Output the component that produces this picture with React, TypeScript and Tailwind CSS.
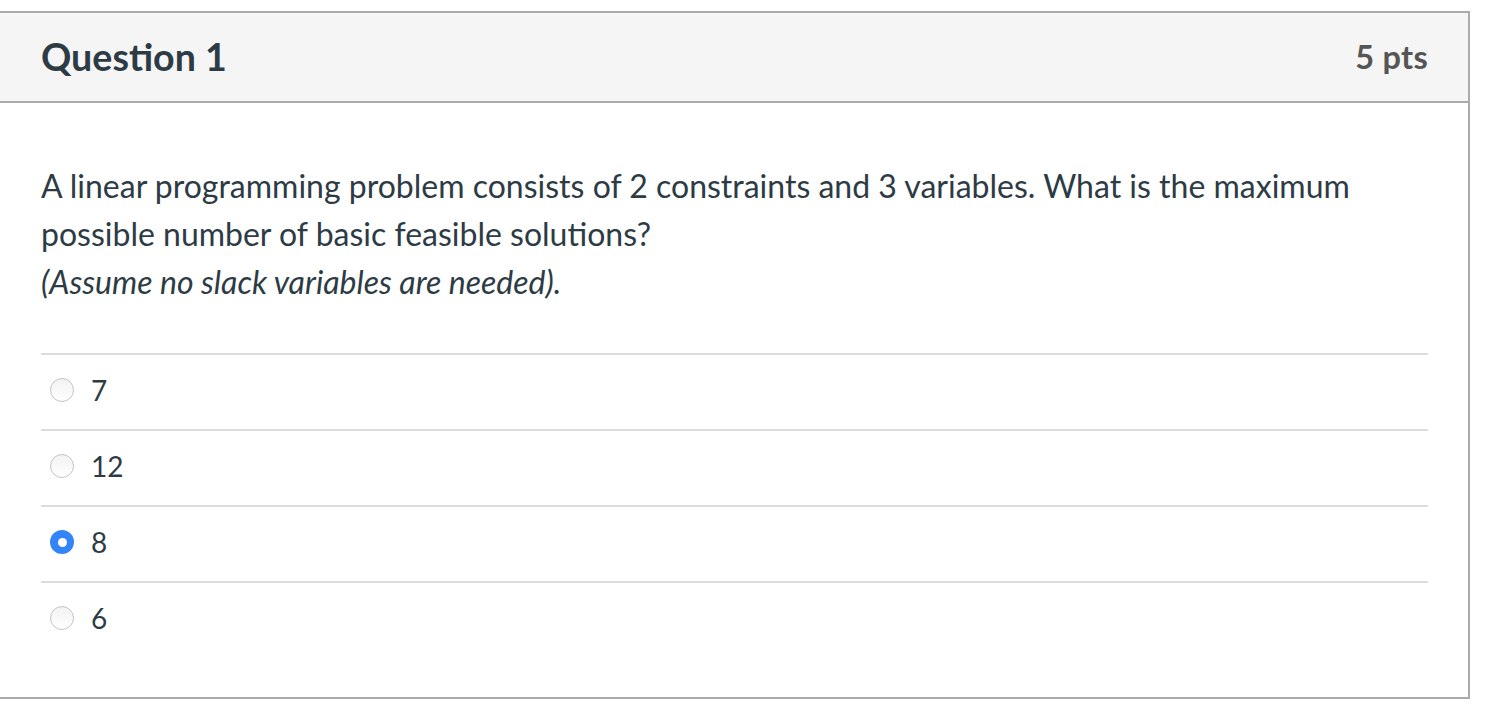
import React from 'react';

const answers = [
  { id: 'a1', label: '7', checked: false },
  { id: 'a2', label: '12', checked: false },
  { id: 'a3', label: '8', checked: true },
  { id: 'a4', label: '6', checked: false },
];

const Radio: React.FC<{ checked: boolean }> = ({ checked }) =>
  checked ? (
    <span className="w-[24px] h-[24px] rounded-full bg-[#3385f7] flex items-center justify-center shrink-0">
      <span className="w-[9px] h-[9px] rounded-full bg-white" />
    </span>
  ) : (
    <span className="w-[24px] h-[24px] rounded-full bg-gradient-to-b from-[#f2f2f2] to-white border border-[#c4c4c4] shrink-0" />
  );

export default function App() {
  return (
    <div className="min-h-screen bg-white pt-[11px] overflow-hidden" style={{ fontFamily: 'Lato, "Open Sans", sans-serif' }}>
      <div className="-ml-[2px] w-[1472px] border-2 border-[#ababab] text-[#2d3b45]">
        <div className="h-[90px] bg-[#f5f5f5] border-b-2 border-[#ababab] flex items-center justify-between pl-[41px] pr-[40px]">
          <h2 className="text-[37.6px] font-bold leading-none">Question 1</h2>
          <span className="text-[32.5px] font-bold leading-none text-[#555555] tracking-[0.3px]">5 pts</span>
        </div>
        <div className="pl-[41px] pr-[40px] pt-[59px] pb-[40px]">
          <div className="text-[32px] leading-[48px]">
            <p>
              A linear programming problem consists of 2 constraints and 3 variables. What is the maximum
              <br />
              possible number of basic feasible solutions?
            </p>
            <p className="italic">(Assume no slack variables are needed).</p>
          </div>
          <div className="mt-[47px]">
            {answers.map((a) => (
              <label
                key={a.id}
                className="h-[76px] border-t-2 border-[#dcdcdc] flex items-center gap-[17px] pl-[9px] pb-[4px]"
              >
                <Radio checked={a.checked} />
                <span className="text-[28px] leading-none">{a.label}</span>
              </label>
            ))}
          </div>
        </div>
      </div>
    </div>
  );
}
